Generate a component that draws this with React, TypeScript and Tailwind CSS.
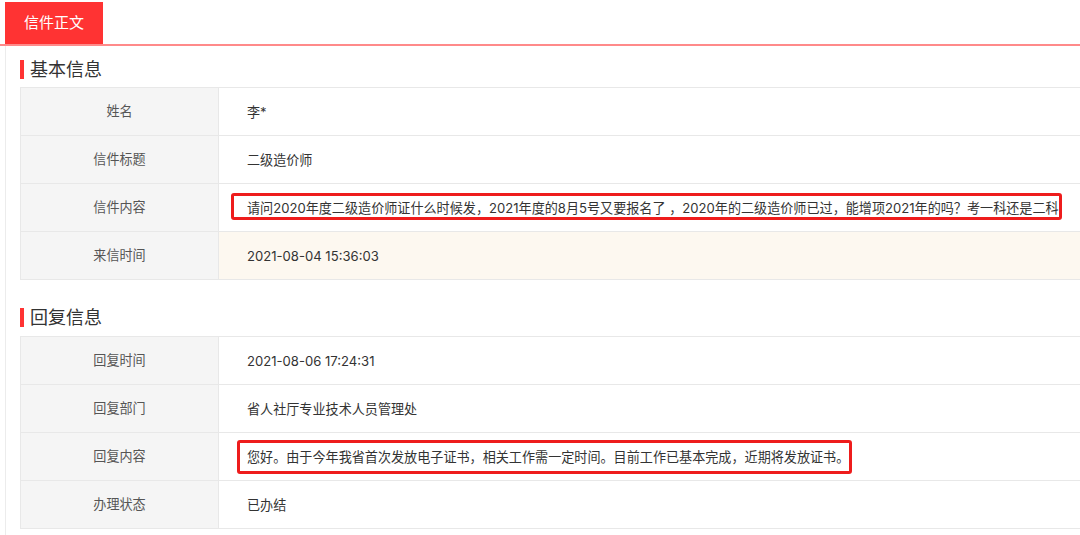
import React from "react";

type Row = {
  label: string;
  value: string;
  tint?: boolean;
  mark?: "wide" | "tall";
};

const basicRows: Row[] = [
  { label: "姓名", value: "李*" },
  { label: "信件标题", value: "二级造价师" },
  {
    label: "信件内容",
    value:
      "请问2020年度二级造价师证什么时候发，2021年度的8月5号又要报名了 ，2020年的二级造价师已过，能增项2021年的吗？考一科还是二科",
    mark: "wide",
  },
  { label: "来信时间", value: "2021-08-04 15:36:03", tint: true },
];

const replyRows: Row[] = [
  { label: "回复时间", value: "2021-08-06 17:24:31" },
  { label: "回复部门", value: "省人社厅专业技术人员管理处" },
  {
    label: "回复内容",
    value: "您好。由于今年我省首次发放电子证书，相关工作需一定时间。目前工作已基本完成，近期将发放证书。",
    mark: "tall",
  },
  { label: "办理状态", value: "已办结" },
];

const SectionTitle = ({ text }: { text: string }) => (
  <div className="flex items-center h-[19px]">
    <span className="w-[4px] h-[19px] bg-[#ff3333]" />
    <span className="ml-[6px] text-[18px] leading-none text-[#333]">{text}</span>
  </div>
);

const InfoTable = ({ rows }: { rows: Row[] }) => (
  <div className="w-[1100px] border-t border-l border-[#e8e8e8]">
    {rows.map((row) => (
      <div key={row.label} className="flex h-[48px] border-b border-[#e8e8e8]">
        <div className="w-[198px] shrink-0 flex items-center justify-center bg-[#f5f5f5] border-r border-[#e8e8e8] text-[#555]">
          {row.label}
        </div>
        <div
          className={
            row.tint
              ? "flex-1 flex items-center pl-[28px] bg-[#fdf8f0] text-[#333] whitespace-nowrap"
              : "flex-1 flex items-center pl-[28px] bg-white text-[#333] whitespace-nowrap"
          }
        >
          <span className="relative inline-block leading-[20px]">
            {row.value}
            {row.mark === "wide" && (
              <span className="absolute -left-[16px] -right-[3px] -top-[5px] -bottom-[2px] border-[3px] border-[#ee1c1c] rounded-[3px]" />
            )}
            {row.mark === "tall" && (
              <span className="absolute -left-[10px] -right-[3px] -top-[7px] -bottom-[7px] border-[3px] border-[#ee1c1c] rounded-[3px]" />
            )}
          </span>
        </div>
      </div>
    ))}
  </div>
);

export default function App() {
  return (
    <div
      className="w-[1080px] h-[535px] overflow-hidden bg-white text-[13.1px]"
      style={{ fontFamily: 'Inter, "Noto Sans CJK SC", sans-serif' }}
    >
      {/* tab header */}
      <div className="pt-[2px] pl-[5px]">
        <div className="w-[98px] h-[42px] flex items-center justify-center bg-[#ff3333] text-white text-[15px]">
          信件正文
        </div>
      </div>
      <div className="h-[2px] bg-[#ff8a8a]" />

      {/* letter body */}
      <div className="ml-[5px] border-l border-[#ececec] pl-[14px] pt-[14px] pb-[20px]">
        <SectionTitle text="基本信息" />
        <div className="mt-[8px]">
          <InfoTable rows={basicRows} />
        </div>

        <div className="mt-[28px]">
          <SectionTitle text="回复信息" />
        </div>
        <div className="mt-[9px]">
          <InfoTable rows={replyRows} />
        </div>
      </div>
    </div>
  );
}
